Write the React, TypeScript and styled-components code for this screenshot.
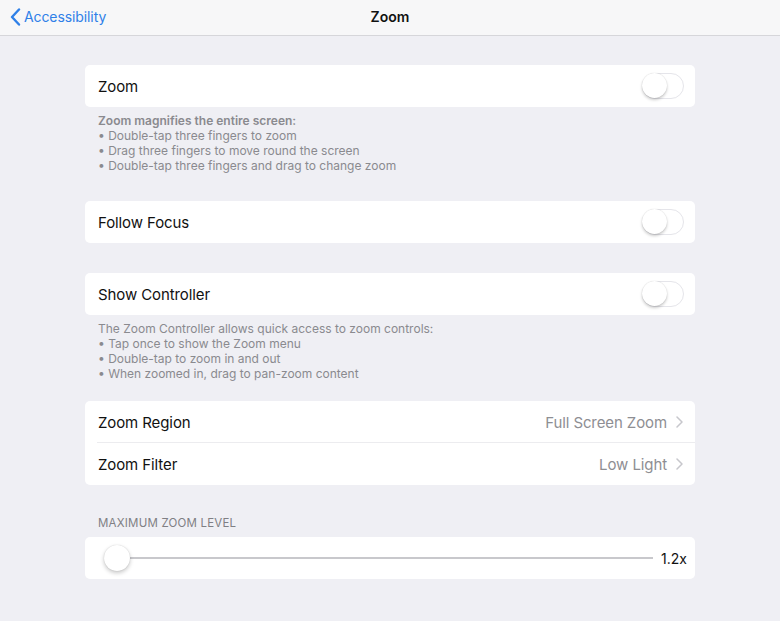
import React from 'react';
import styled, { createGlobalStyle } from 'styled-components';

const GlobalStyle = createGlobalStyle`
  html, body {
    margin: 0;
    padding: 0;
    background: #efeff4;
    font-family: Inter, "Open Sans", "Liberation Sans", sans-serif;
    -webkit-font-smoothing: antialiased;
  }
`;

const Page = styled.div`
  width: 780px;
  height: 621px;
  overflow: hidden;
  background: #efeff4;
`;

const NavBar = styled.div`
  height: 36px;
  background: #f7f7f8;
  border-bottom: 1px solid #d6d6da;
  display: grid;
  grid-template-columns: 1fr auto 1fr;
  align-items: center;
  box-sizing: border-box;
  padding-bottom: 2px;
`;

const BackButton = styled.div`
  display: flex;
  align-items: center;
  gap: 3px;
  padding-left: 10px;
  color: #2f80e8;
  font-size: 14px;
  letter-spacing: -0.1px;
`;

const NavTitle = styled.div`
  font-size: 14px;
  font-weight: 600;
  color: #111;
`;

const Content = styled.div`
  width: 610px;
  margin: 0 auto;
  padding-top: 29px;
`;

const Card = styled.div`
  background: #fff;
  border-radius: 5px;
  overflow: hidden;
`;

const Row = styled.div<{ $divider?: boolean }>`
  height: 42px;
  display: flex;
  align-items: center;
  padding: 0 12px 0 13px;
  position: relative;
  ${(p) =>
    p.$divider &&
    `
    &::after {
      content: '';
      position: absolute;
      left: 12px;
      right: 0;
      bottom: 0;
      height: 1px;
      background: #ececef;
    }
  `}
`;

const Label = styled.div`
  flex: 1;
  font-size: 15px;
  color: #111;
  letter-spacing: -0.1px;
`;

const Value = styled.div`
  font-size: 15px;
  color: #8e8e93;
  display: flex;
  align-items: center;
  gap: 9px;
  letter-spacing: -0.1px;
`;

const Toggle = styled.div`
  width: 42px;
  height: 26px;
  box-sizing: border-box;
  border-radius: 13px;
  border: 1.5px solid #e5e5ea;
  background: #fff;
  position: relative;
  margin-right: -1px;
`;

const Knob = styled.div`
  position: absolute;
  left: -1px;
  top: -1px;
  width: 25px;
  height: 25px;
  border-radius: 50%;
  background: #fff;
  box-shadow: 0 2px 3px rgba(0, 0, 0, 0.2), 0 0 1px rgba(0, 0, 0, 0.18);
`;

const Footer = styled.div<{ $gap: number }>`
  padding: 6px 13px 0;
  margin-bottom: ${(p) => p.$gap}px;
  font-size: 12px;
  line-height: 15px;
  color: #8a8a8f;
`;

const FooterTitle = styled.div`
  font-weight: 600;
`;

const Spacer = styled.div<{ $h: number }>`
  height: ${(p) => p.$h}px;
`;

const SectionHeader = styled.div`
  padding: 0 13px 7px;
  margin-top: 31px;
  font-size: 11.5px;
  line-height: 14px;
  letter-spacing: 0.2px;
  color: #7f7f84;
  text-transform: uppercase;
`;

const SliderRow = styled.div`
  height: 42px;
  display: flex;
  align-items: center;
  padding: 0 8px 0 19px;
  gap: 8px;
`;

const Track = styled.div`
  flex: 1;
  height: 2px;
  background: #c8c8cc;
  position: relative;
`;

const Thumb = styled.div`
  position: absolute;
  left: 0;
  top: -12px;
  width: 26px;
  height: 26px;
  border-radius: 50%;
  background: #fff;
  box-shadow: 0 2px 4px rgba(0, 0, 0, 0.22), 0 0 1px rgba(0, 0, 0, 0.2);
`;

const SliderValue = styled.div`
  font-size: 14px;
  color: #111;
`;

const Chevron = () => (
  <svg width="7" height="12" viewBox="0 0 7 12" fill="none">
    <path d="M1 1l5 5-5 5" stroke="#c7c7cc" strokeWidth="1.5" strokeLinecap="round" strokeLinejoin="round" />
  </svg>
);

const BackChevron = () => (
  <svg width="11" height="18" viewBox="0 0 11 18" fill="none">
    <path d="M9 1.5L2 9l7 7.5" stroke="#2f80e8" strokeWidth="2.4" strokeLinecap="round" strokeLinejoin="round" />
  </svg>
);

const SwitchRow: React.FC<{ label: string }> = ({ label }) => (
  <Card>
    <Row>
      <Label>{label}</Label>
      <Toggle>
        <Knob />
      </Toggle>
    </Row>
  </Card>
);

const App: React.FC = () => (
  <Page>
    <GlobalStyle />
    <NavBar>
      <BackButton>
        <BackChevron />
        Accessibility
      </BackButton>
      <NavTitle>Zoom</NavTitle>
      <div />
    </NavBar>
    <Content>
      <SwitchRow label="Zoom" />
      <Footer $gap={28}>
        <FooterTitle>Zoom magnifies the entire screen:</FooterTitle>
        <div>• Double-tap three fingers to zoom</div>
        <div>• Drag three fingers to move round the screen</div>
        <div>• Double-tap three fingers and drag to change zoom</div>
      </Footer>
      <SwitchRow label="Follow Focus" />
      <Spacer $h={30} />
      <SwitchRow label="Show Controller" />
      <Footer $gap={20}>
        <div>The Zoom Controller allows quick access to zoom controls:</div>
        <div>• Tap once to show the Zoom menu</div>
        <div>• Double-tap to zoom in and out</div>
        <div>• When zoomed in, drag to pan-zoom content</div>
      </Footer>
      <Card>
        <Row $divider>
          <Label>Zoom Region</Label>
          <Value>
            Full Screen Zoom
            <Chevron />
          </Value>
        </Row>
        <Row>
          <Label>Zoom Filter</Label>
          <Value>
            Low Light
            <Chevron />
          </Value>
        </Row>
      </Card>
      <SectionHeader>Maximum Zoom Level</SectionHeader>
      <Card>
        <SliderRow>
          <Track>
            <Thumb />
          </Track>
          <SliderValue>1.2x</SliderValue>
        </SliderRow>
      </Card>
    </Content>
  </Page>
);

export default App;
